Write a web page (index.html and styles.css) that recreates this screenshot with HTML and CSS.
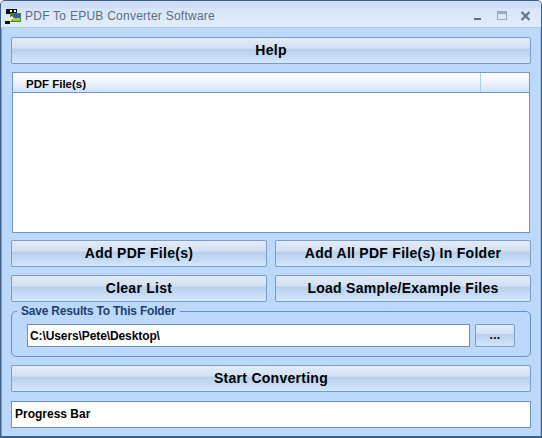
FILE: index.html
```html
<!DOCTYPE html>
<html lang="en">
<head>
    <meta charset="UTF-8">
    <title>PDF To EPUB Converter Software</title>
    <link rel="stylesheet" href="styles.css">
</head>
<body>
    <div class="window">
        <div class="titlebar">
            <svg class="app_icon" width="17" height="17" viewBox="0 0 17 17">
                <rect x="1" y="1" width="11" height="5" fill="#111"/>
                <rect x="5" y="2" width="2" height="2" fill="#fff"/>
                <rect x="9" y="2" width="2" height="2" fill="#fff"/>
                <path d="M12 1l3 4h-3z" fill="#e8e8e8"/>
                <rect x="5" y="5" width="11" height="9" fill="#3f8a2c"/>
                <rect x="8" y="6" width="7" height="4" fill="#2a5fc0"/>
                <path d="M8 10h7v3H8z" fill="#b8c23a"/>
                <path d="M0 12l7-4 2 2-5 5H0z" fill="#f4e4c0"/>
                <path d="M0 13h5v3H0z" fill="#111"/>
            </svg>
            <span class="title_text">PDF To EPUB Converter Software</span>
            <div class="caption_btns">
                <svg width="10" height="10" viewBox="0 0 10 10"><rect x="0" y="7" width="7" height="2" fill="#5f6f86"/></svg>
                <svg width="10" height="10" viewBox="0 0 10 10"><rect x="0.5" y="0.5" width="9" height="8" fill="none" stroke="#9aa9bd"/><rect x="1" y="1" width="8" height="2" fill="#9aa9bd"/></svg>
                <svg width="11" height="10" viewBox="0 0 11 10"><path d="M1.5 1l8 8M9.5 1l-8 8" stroke="#66788f" stroke-width="2.4" fill="none"/></svg>
            </div>
        </div>
        <div class="client">
            <button class="btn">Help</button>
            <div class="file_list">
                <div class="list_head">
                    <span class="col_name">PDF File(s)</span>
                    <span class="col_rest"></span>
                </div>
            </div>
            <div class="btn_row">
                <button class="btn">Add PDF File(s)</button>
                <button class="btn">Add All PDF File(s) In Folder</button>
            </div>
            <div class="btn_row">
                <button class="btn">Clear List</button>
                <button class="btn">Load Sample/Example Files</button>
            </div>
            <fieldset class="save_group">
                <legend>Save Results To This Folder</legend>
                <div class="path_box">C:\Users\Pete\Desktop\</div>
                <button class="btn browse">...</button>
            </fieldset>
            <button class="btn">Start Converting</button>
            <div class="progress">Progress Bar</div>
        </div>
    </div>
</body>
</html>
```

FILE: styles.css
```css
* {
    box-sizing: border-box;
}
html, body {
    margin: 0;
    padding: 0;
}
body {
    font-family: "Liberation Sans", Arial, sans-serif;
    color: #000;
}
.window {
    display: flex;
    flex-direction: column;
    width: 542px;
    height: 438px;
    border: 1px solid #3f5f88;
    border-bottom-width: 2px;
    border-radius: 5px 5px 0 0;
    background: #bcd8fb;
    overflow: hidden;
}
.titlebar {
    display: flex;
    align-items: center;
    flex: none;
    height: 27px;
    padding: 4px 10px 0 4px;
    border-bottom: 1px solid #a9caf2;
    background: linear-gradient(to bottom, #cbddf6 0%, #cfe0f7 26%, #d6e5f9 30%, #e2edfb 100%);
}
.app_icon {
    flex: none;
    margin-right: 3px;
}
.title_text {
    font-size: 12px;
    letter-spacing: 0.25px;
    color: #5e6e85;
}
.caption_btns {
    display: flex;
    align-items: center;
    gap: 13px;
    margin-left: auto;
}
.client {
    display: flex;
    flex-direction: column;
    flex: 1;
    padding: 9px 9px 0;
    border-left: 1px solid #7f9fc9;
    border-right: 1px solid #a3c0e6;
}
.btn {
    display: block;
    flex: none;
    width: 100%;
    height: 27px;
    padding: 0 0 2px;
    border: 1px solid #7b9bc9;
    border-radius: 2px;
    font-family: inherit;
    font-size: 14px;
    font-weight: bold;
    letter-spacing: 0.27px;
    color: #000;
    background: linear-gradient(to bottom, #e3ecf8 0%, #d2e0f3 40%, #b8d0ee 45%, #c6dcf5 75%, #d3e8fb 100%);
}
.file_list {
    flex: none;
    height: 161px;
    margin: 8px 1px 7px;
    border: 1px solid #6a96d4;
    background: #fff;
}
.list_head {
    display: flex;
    height: 20px;
    border-bottom: 1px solid #6a96d4;
    font-size: 11.5px;
    font-weight: bold;
    line-height: 22px;
    background: linear-gradient(to bottom, #fff 0%, #f2f7fe 40%, #cfe1f9 100%);
}
.col_name {
    width: 468px;
    padding-left: 13px;
    border-right: 1px solid #b5cdec;
}
.col_rest {
    flex: 1;
}
.btn_row {
    display: flex;
    flex: none;
    gap: 8px;
    margin-bottom: 8px;
}
.btn_row .btn {
    flex: 1;
    width: auto;
}
.save_group {
    position: relative;
    display: flex;
    flex: none;
    align-items: flex-start;
    gap: 5px;
    height: 53px;
    min-width: 0;
    margin: -6px 0 8px;
    padding: 6px 15px 0;
    border: 1px solid #6a90c8;
    border-radius: 5px;
}
.save_group legend {
    padding: 0 5px 0 4px;
    margin-left: -10px;
    font-size: 12px;
    font-weight: bold;
    letter-spacing: -0.2px;
    color: #1f3f70;
}
.path_box {
    width: 443px;
    height: 23px;
    padding-left: 2px;
    border: 1px solid #6a90c8;
    font-size: 12px;
    font-weight: bold;
    letter-spacing: -0.1px;
    line-height: 22px;
    background: #fff;
}
.browse {
    width: 40px;
    height: 23px;
    font-size: 12px;
}
.progress {
    flex: none;
    height: 27px;
    margin-top: 9px;
    padding-left: 3px;
    border: 1px solid #6a90c8;
    font-size: 12px;
    font-weight: bold;
    line-height: 25px;
    background: #fff;
}
```
